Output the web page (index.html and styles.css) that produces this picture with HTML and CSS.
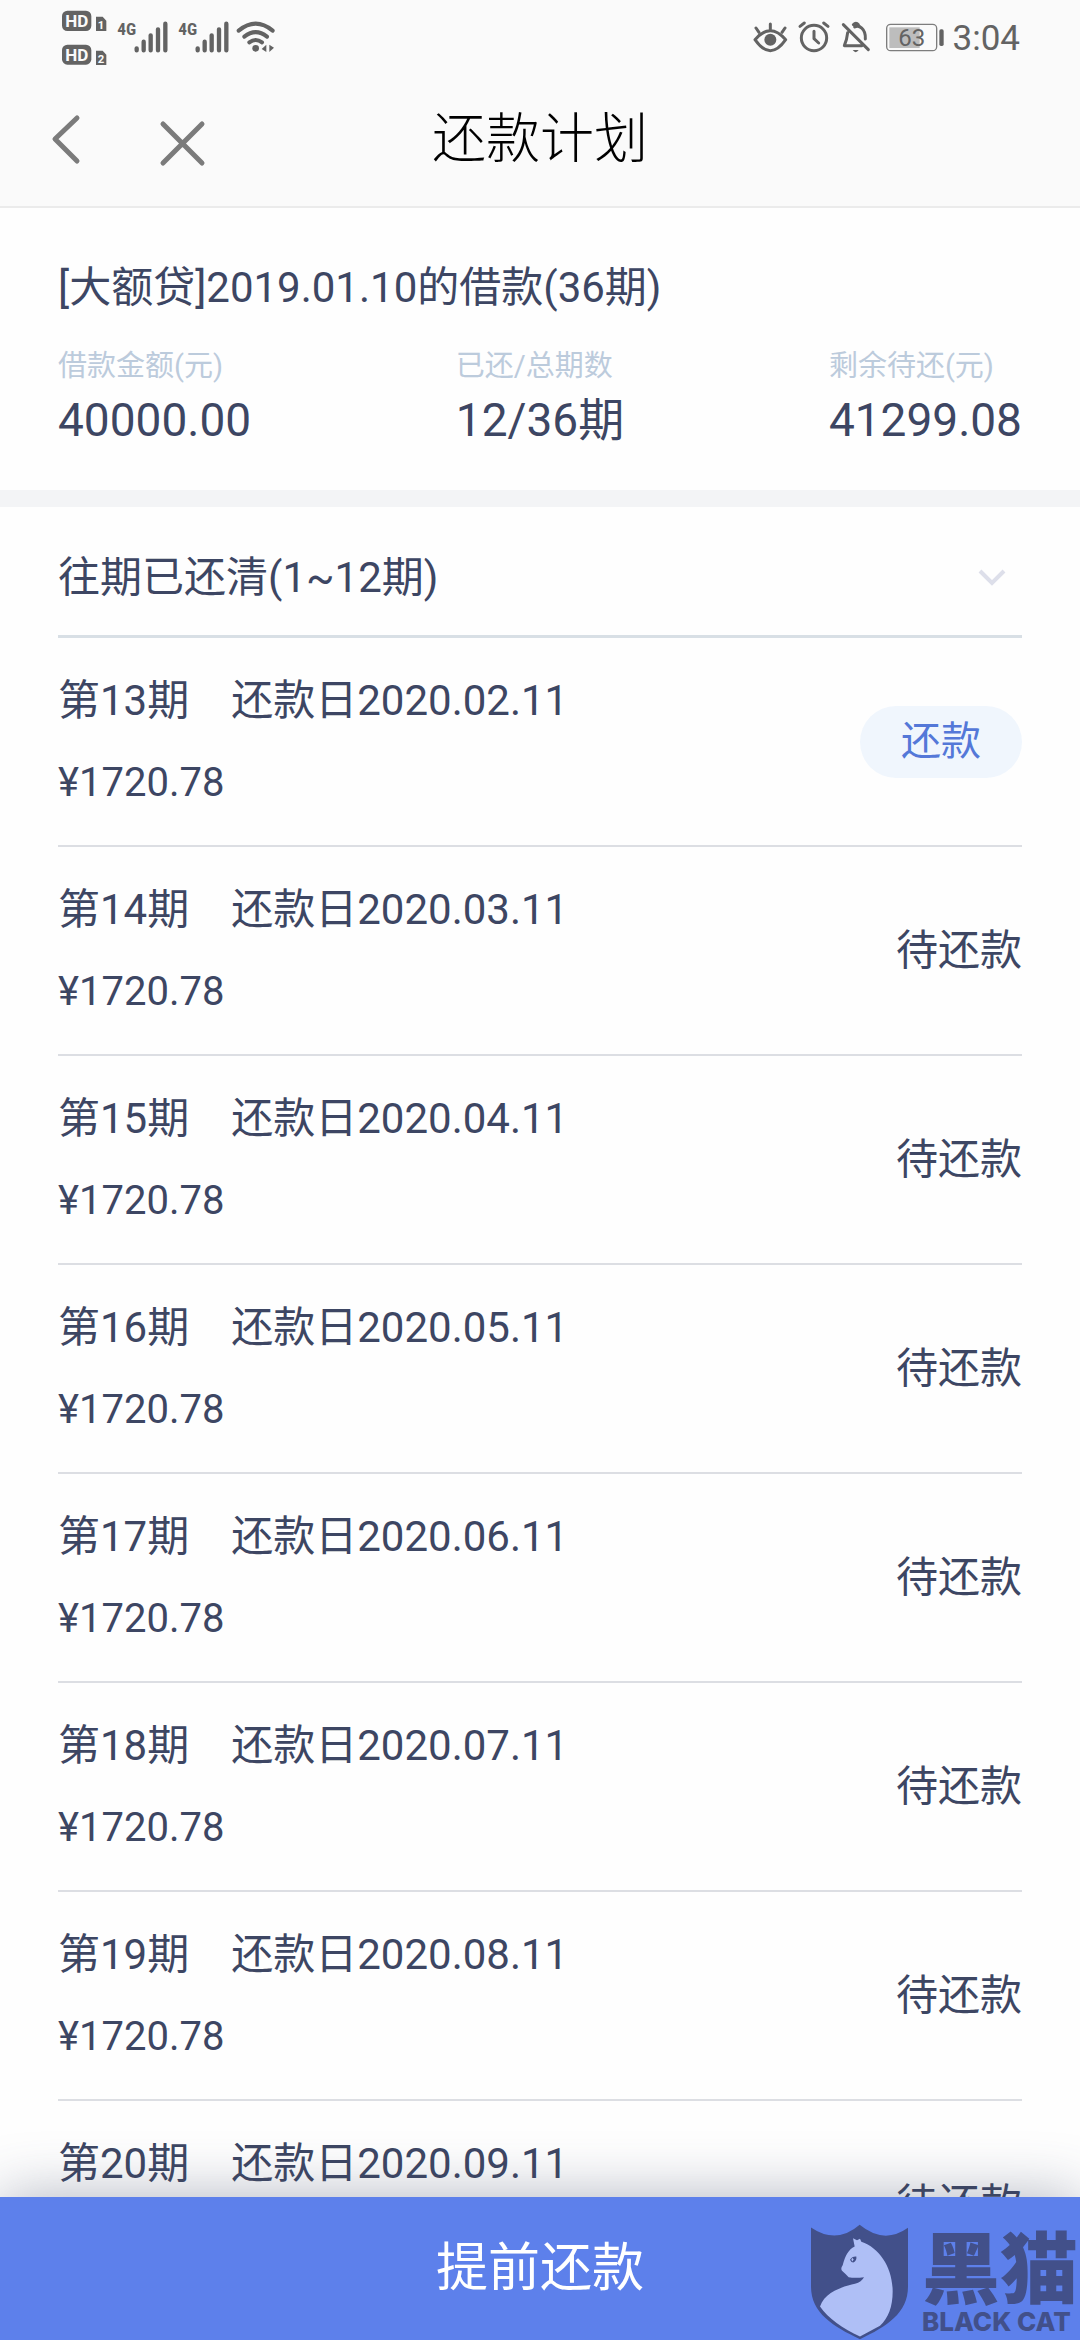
FILE: index.html
```html
<!DOCTYPE html>
<html lang="zh-CN">
<head>
<meta charset="utf-8">
<meta name="viewport" content="width=device-width, initial-scale=1">
<title>还款计划</title>
<link rel="stylesheet" href="styles.css">
</head>
<body>
<div class="app">
  <header class="top">
    <div class="status">
      <svg class="status-left" viewBox="60 0 660 240" aria-hidden="true">
        <rect x="66" y="32" width="88" height="61" rx="16"/>
        <rect x="66" y="134" width="88" height="60" rx="16"/>
        <path d="M168 50h20l11 12v31h-31zM168 152h20l11 12v31h-31z"/>
        <text class="hd" x="110" y="80">HD</text>
        <text class="hd" x="110" y="182">HD</text>
        <text class="sim" x="183" y="86">1</text>
        <text class="sim" x="183" y="188">2</text>
        <text class="net" x="232" y="106">4G</text>
        <text class="net" x="415" y="106">4G</text>
        <path class="bars" d="M290 145v6M311 125v26M332 106v45M354 88v63M376 71v80"/>
        <path class="bars" d="M473 145v6M494 125v26M515 106v45M537 88v63M559 71v80"/>
        <path class="waves" d="M596 92q51-42 102 0M613 110q34-27 68 0M628 127q19-14 38 0"/>
        <circle cx="647" cy="145" r="10"/>
        <path d="M679 134v22l-14-9zM688 134v22l14-13z"/>
      </svg>
      <div class="status-right">
        <svg class="status-icons" viewBox="60 0 600 240" aria-hidden="true">
          <g class="line">
            <path d="M75 119q46-54 92 0q-46 66-92 0z"/>
            <path d="M121 72v16M78 84l9 13M165 84l-9 13"/>
            <circle cx="252" cy="114" r="38"/>
            <path d="M252 94v22l14 13M210 79l13-10M294 79l-13-10"/>
            <path d="M340 74l75 75M353 98q-2 20-10 39h52M374 81c12-8 34 5 32 36M370 74q8-9 15 0"/>
          </g>
          <circle cx="121" cy="119" r="18"/>
          <path d="M368 150h18q-9 13-18 0z"/>
          <rect class="charge" x="478" y="82" width="91" height="62"/>
          <rect class="case" x="470" y="73" width="150" height="79" rx="12"/>
          <rect x="628" y="88" width="13" height="50" rx="5"/>
          <text class="level" x="545" y="137">63</text>
        </svg>
        <span class="clock">3:04</span>
      </div>
    </div>
    <nav class="navbar">
      <div class="nav-buttons">
        <button class="icon-button" aria-label="返回"><svg class="nav-icon" viewBox="0 0 48 64"><path d="M35 10 13 31 35 53"/></svg></button>
        <button class="icon-button" aria-label="关闭"><svg class="nav-icon" viewBox="0 0 48 64"><path d="M5 16 44 55M44 16 5 55"/></svg></button>
      </div>
      <h1 class="page-title">还款计划</h1>
    </nav>
  </header>

  <main class="content">
    <section class="summary">
      <h2 class="loan-name">[大额贷]2019.01.10的借款(36期)</h2>
      <dl class="figures">
        <div><dt>借款金额(元)</dt><dd>40000.00</dd></div>
        <div><dt>已还/总期数</dt><dd>12/36期</dd></div>
        <div><dt>剩余待还(元)</dt><dd>41299.08</dd></div>
      </dl>
    </section>

    <section class="plan">
      <button class="settled" aria-expanded="false">
        <span>往期已还清(1~12期)</span>
        <svg class="chevron" viewBox="0 0 30 20" aria-hidden="true"><path d="M3 3 15 15 27 3"/></svg>
      </button>
      <ul class="terms">
        <li class="term"><div><p>第13期　还款日2020.02.11</p><p class="amount">¥1720.78</p></div><button class="pay">还款</button></li>
        <li class="term"><div><p>第14期　还款日2020.03.11</p><p class="amount">¥1720.78</p></div><span>待还款</span></li>
        <li class="term"><div><p>第15期　还款日2020.04.11</p><p class="amount">¥1720.78</p></div><span>待还款</span></li>
        <li class="term"><div><p>第16期　还款日2020.05.11</p><p class="amount">¥1720.78</p></div><span>待还款</span></li>
        <li class="term"><div><p>第17期　还款日2020.06.11</p><p class="amount">¥1720.78</p></div><span>待还款</span></li>
        <li class="term"><div><p>第18期　还款日2020.07.11</p><p class="amount">¥1720.78</p></div><span>待还款</span></li>
        <li class="term"><div><p>第19期　还款日2020.08.11</p><p class="amount">¥1720.78</p></div><span>待还款</span></li>
        <li class="term"><div><p>第20期　还款日2020.09.11</p><p class="amount">¥1720.78</p></div><span>待还款</span></li>
      </ul>
    </section>
  </main>

  <footer class="footer">
    <button class="prepay">提前还款</button>
    <div class="brand">
      <svg class="shield" viewBox="90 250 300 350" aria-hidden="true">
        <path class="shield-back" d="M93 263Q170 315 239 255Q312 315 384 264V440C384 520 320 560 240 598C160 560 93 520 93 440z"/>
        <path class="cat" d="M219 295L231 301L240 297L244 306C300 325 338 385 338 455C338 500 325 535 300 558L240 590C190 567 143 535 120 500C135 455 190 440 225 432Q245 426 252 412Q225 416 206 412Q196 402 186 393Q181 386 188 376C197 345 205 330 224 320z"/>
        <path class="shield-back" d="M210 360q6-11 19-10q2 12-9 18q-7 0-10-8z"/>
        <path class="cat" d="M217 354l4 5-4 6-3-5z"/>
      </svg>
      <div class="brand-text">
        <span class="brand-cn">黑猫</span>
        <span class="brand-en">BLACK CAT</span>
      </div>
    </div>
  </footer>
</div>
</body>
</html>
```
FILE: styles.css
```css
* { box-sizing: border-box; margin: 0; padding: 0; }

body {
  background: #fefefe;
  color: #3d4663;
  font-family: Roboto, "Noto Sans CJK SC", sans-serif;
  font-size: 42px;
  line-height: 60px;
}

button {
  border: 0;
  background: none;
  color: inherit;
  font: inherit;
  cursor: pointer;
}

ul { list-style: none; }

.app {
  display: flex;
  flex-direction: column;
  height: 100vh;
}

/* Status bar and title */
.top {
  background: #fafafa;
  border-bottom: 2px solid #ebebeb;
}

.status {
  display: flex;
  justify-content: space-between;
  height: 80px;
  padding: 0 60px;
  color: #636363;
}

.status svg { height: 80px; fill: #636363; }
.status-left { width: 220px; }
.status-icons { width: 200px; }
.status-right { display: flex; gap: 3px; }

.clock {
  font-size: 35px;
  line-height: 77px;
}

.status .hd { fill: #fafafa; font: 700 51px Roboto, sans-serif; text-anchor: middle; }
.status .sim { fill: #fafafa; font: 700 34px Roboto, sans-serif; text-anchor: middle; }
.net { font: 700 52px "Roboto Condensed", "Liberation Sans Narrow", Roboto, sans-serif; }
.level { font: 400 72px Roboto, sans-serif; text-anchor: middle; }
.bars { stroke: #636363; stroke-width: 13; stroke-linecap: round; }
.waves { fill: none; stroke: #636363; stroke-width: 12; stroke-linecap: round; }
.status .waves { fill: none; }
.line { fill: none; stroke: #636363; stroke-width: 9; stroke-linecap: round; stroke-linejoin: round; }
.status .charge { fill: #bdbdbd; }
.status .case { fill: none; stroke: #7d7d7d; stroke-width: 4; }

.navbar {
  display: grid;
  grid-template-columns: 1fr auto 1fr;
  align-items: center;
  height: 126px;
  padding: 0 42px 6px;
}

.nav-buttons { display: flex; gap: 68px; }
.icon-button { width: 48px; height: 64px; }

.nav-icon {
  display: block;
  width: 48px;
  height: 64px;
  fill: none;
  stroke: #7b7b7b;
  stroke-width: 5;
  stroke-linecap: round;
  stroke-linejoin: round;
}

.page-title {
  color: #000;
  font-size: 54px;
  font-weight: 300;
  line-height: 80px;
}

/* Loan summary */
.content {
  flex: 1;
  min-height: 0;
  overflow-y: auto;
  scrollbar-width: none;
}

.summary {
  padding: 50px 58px 38px;
  border-bottom: 17px solid #f3f4f6;
}

.loan-name { font-size: 42px; font-weight: 400; }

.figures {
  display: flex;
  justify-content: space-between;
  padding-top: 26px;
}

.figures dt {
  color: #bccbdc;
  font-size: 29px;
  line-height: 44px;
}

.figures dd {
  font-size: 46px;
  line-height: 64px;
}

/* Repayment terms */
.plan { padding: 0 58px; }

.settled {
  display: flex;
  align-items: center;
  justify-content: space-between;
  width: 100%;
  height: 131px;
  padding: 14px 15px 0 0;
  border-bottom: 3px solid #d8dfe5;
}

.chevron {
  width: 30px;
  height: 20px;
  fill: none;
  stroke: #dddfea;
  stroke-width: 4;
}

.term {
  display: flex;
  align-items: center;
  justify-content: space-between;
  height: 209px;
  border-bottom: 2px solid #dcdee3;
}

.amount {
  margin-top: 22px;
  font-size: 40px;
}

.pay {
  width: 162px;
  height: 72px;
  border-radius: 36px;
  background: #f0f6fd;
  color: #5478d8;
  font-size: 40px;
}

/* Prepay bar */
.footer {
  position: relative;
  z-index: 1;
  background: #5d80eb;
  box-shadow: 0 0 60px rgba(61, 70, 99, 0.4);
}

.prepay {
  width: 100%;
  height: 143px;
  color: #fff;
  font-size: 52px;
}

.brand {
  position: absolute;
  right: 0;
  bottom: 0;
  display: flex;
  gap: 12px;
  color: #42508a;
  pointer-events: none;
}

.shield { width: 100px; height: 117px; }
.shield-back { fill: #42508a; }
.cat { fill: #afbff6; }
.brand-text { display: flex; flex-direction: column; gap: 8px; width: 158px; padding-top: 5px; }
.brand-cn { font-family: "Noto Sans CJK SC", sans-serif; font-size: 78px; font-weight: 900; line-height: 72px; }
.brand-en { font-family: Inter, sans-serif; font-size: 26px; font-weight: 800; line-height: 28px; white-space: nowrap; }
```
